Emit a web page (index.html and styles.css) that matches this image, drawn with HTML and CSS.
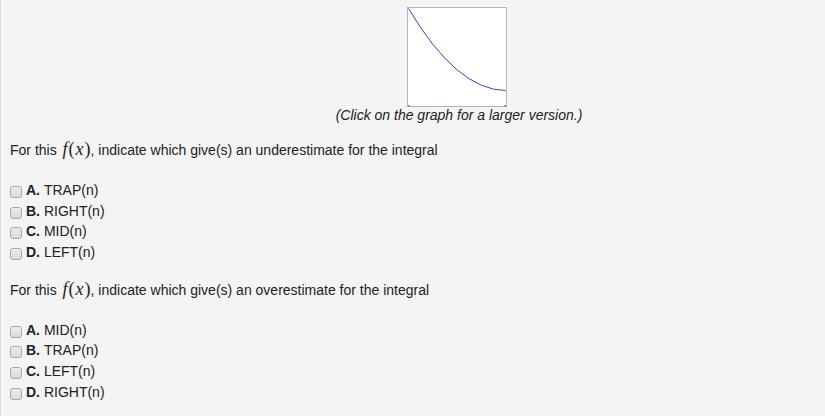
FILE: index.html
```html
<!DOCTYPE html>
<html>
<head>
<meta charset="utf-8">
<link rel="stylesheet" href="styles.css">
</head>
<body>
<div class="page">
  <div class="figure">
    <div class="graph">
      <svg width="98" height="98" viewBox="0 0 98 98">
        <path d="M0.5 0.5 Q49 82 97.5 82.5" fill="none" stroke="#3a3aff" stroke-width="1"/>
      </svg>
      <span class="tick tick-l"></span>
      <span class="tick tick-r"></span>
    </div>
    <div class="caption">(Click on the graph for a larger version.)</div>
  </div>

  <p class="question">For this <span class="math"><i class="fn">f</i>(<i class="var">x</i>)</span>, indicate which give(s) an underestimate for the integral</p>
  <div class="options">
    <label class="option"><input type="checkbox" class="cb"><b>A.</b>&nbsp;TRAP(n)</label>
    <label class="option"><input type="checkbox" class="cb"><b>B.</b>&nbsp;RIGHT(n)</label>
    <label class="option"><input type="checkbox" class="cb"><b>C.</b>&nbsp;MID(n)</label>
    <label class="option"><input type="checkbox" class="cb"><b>D.</b>&nbsp;LEFT(n)</label>
  </div>

  <p class="question second">For this <span class="math"><i class="fn">f</i>(<i class="var">x</i>)</span>, indicate which give(s) an overestimate for the integral</p>
  <div class="options">
    <label class="option"><input type="checkbox" class="cb"><b>A.</b>&nbsp;MID(n)</label>
    <label class="option"><input type="checkbox" class="cb"><b>B.</b>&nbsp;TRAP(n)</label>
    <label class="option"><input type="checkbox" class="cb"><b>C.</b>&nbsp;LEFT(n)</label>
    <label class="option"><input type="checkbox" class="cb"><b>D.</b>&nbsp;RIGHT(n)</label>
  </div>
</div>
</body>
</html>
```

FILE: styles.css
```css
html, body {
  margin: 0;
  padding: 0;
  background: #f4f4f4;
}

.page {
  box-sizing: border-box;
  min-height: 416px;
  border-left: 1px solid #dcdcdc;
  padding: 7px 0 0 9px;
  font-family: "Liberation Sans", Arial, sans-serif;
  font-size: 14px;
  color: #222;
}

.figure {
  width: 300px;
  margin-left: 297px;
  display: flex;
  flex-direction: column;
  align-items: center;
}

.graph {
  position: relative;
  width: 98px;
  height: 98px;
  border: 1px solid #b4b4b4;
  background: #fff;
}

.graph svg {
  display: block;
}

.tick {
  position: absolute;
  bottom: -1px;
  width: 2px;
  height: 2px;
  background: #999;
}

.tick-l { left: 0; }
.tick-r { right: 0; }

.caption {
  font-style: italic;
  line-height: 16px;
  margin-left: 4px;
}

.question {
  margin: 17px 0 0 0;
  line-height: 20px;
}

.question.second {
  margin-top: 17px;
}

.math {
  font-family: "Liberation Serif", "Times New Roman", serif;
  font-size: 18px;
  line-height: 1;
  padding-left: 2px;
}

.math i {
  font-style: italic;
}

.math .fn {
  padding-right: 1px;
}

.math .var {
  padding: 0 1px;
}

.options {
  margin-top: 20px;
  display: flex;
  flex-direction: column;
}

.option {
  display: flex;
  align-items: flex-start;
  line-height: 20.7px;
  height: 20.7px;
}

.cb {
  appearance: none;
  -webkit-appearance: none;
  box-sizing: border-box;
  width: 12px;
  height: 12px;
  margin: 6px 4px 0 0;
  border: 1px solid #a9a9a9;
  border-radius: 3px;
  background: linear-gradient(#ededed, #d9d9d9);
  flex: none;
}
```
